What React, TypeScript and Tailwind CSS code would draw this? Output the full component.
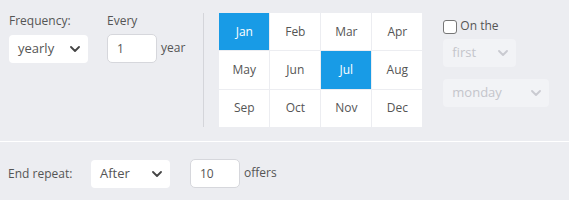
import React from "react";

const months = ["Jan", "Feb", "Mar", "Apr", "May", "Jun", "Jul", "Aug", "Sep", "Oct", "Nov", "Dec"];
const active = ["Jan", "Jul"];

function Chevron({ className = "" }: { className?: string }) {
  return (
    <svg viewBox="0 0 10 6" className={`pointer-events-none absolute top-1/2 h-[6px] w-[10px] -translate-y-1/2 ${className}`}>
      <path d="M1 1l4 4 4-4" fill="none" stroke="currentColor" strokeWidth="1.8" strokeLinecap="round" strokeLinejoin="round" />
    </svg>
  );
}

function Select({ value, width, disabled = false }: { value: string; width: string; disabled?: boolean }) {
  return (
    <div className={`relative h-[28px] ${width}`}>
      <div
        className={`flex h-full items-center rounded-[4px] pl-[9px] text-[13px] ${
          disabled ? "bg-[#f2f3f6] text-[#c4c5cb]" : "bg-white text-[#555]"
        }`}
      >
        {value}
      </div>
      <Chevron className={`right-[8px] ${disabled ? "text-[#c9cad0]" : "text-[#444]"}`} />
    </div>
  );
}

function NumInput({ value, width }: { value: string; width: string }) {
  return (
    <div className={`flex h-[29px] items-center rounded-[5px] border border-[#d6d7dc] bg-white pl-[9px] text-[12px] text-[#555] ${width}`}>
      {value}
    </div>
  );
}

export default function App() {
  return (
    <div className="h-[200px] w-[569px] bg-[#ecedf1] font-['Open_Sans',sans-serif] text-[12px] text-[#555]">
      <div className="flex h-[141px] pt-[13px]">
        <div className="ml-[9px] flex flex-col">
          <div className="h-[22px] leading-[16px]">Frequency:</div>
          <Select value="yearly" width="w-[79px]" />
        </div>
        <div className="ml-[19px] flex flex-col">
          <div className="h-[21px] leading-[16px]">Every</div>
          <div className="flex items-center gap-[4px]">
            <NumInput value="1" width="w-[50px]" />
            <span className="-mt-[2px]">year</span>
          </div>
        </div>
        <div className="ml-[18px] h-[114px] w-px bg-[#d4d5da]" />
        <div className="ml-[15px] grid h-[114px] w-[203px] grid-cols-4 grid-rows-3 gap-px">
          {months.map((m) => (
            <div
              key={m}
              className={`flex items-center justify-center ${
                active.includes(m) ? "bg-[#189be6] text-white" : "bg-white text-[#555]"
              }`}
            >
              {m}
            </div>
          ))}
        </div>
        <div className="ml-[21px] flex flex-col">
          <label className="flex h-[26px] items-center gap-[3px] pt-[2px]">
            <span className="h-[14px] w-[14px] rounded-[3px] border border-[#767676] bg-white" />
            <span className="-mt-[2px] text-[#555]">On the</span>
          </label>
          <Select value="first" width="w-[73px]" disabled />
          <div className="h-[12px]" />
          <Select value="monday" width="w-[106px]" disabled />
        </div>
      </div>
      <div className="h-px bg-white" />
      <div className="flex items-center pt-[17px]">
        <span className="ml-[8px] w-[83px]">End repeat:</span>
        <Select value="After" width="w-[79px]" />
        <div className="ml-[20px] flex items-center gap-[4px]">
          <NumInput value="10" width="w-[50px]" />
          <span className="-mt-[1px]">offers</span>
        </div>
      </div>
    </div>
  );
}
